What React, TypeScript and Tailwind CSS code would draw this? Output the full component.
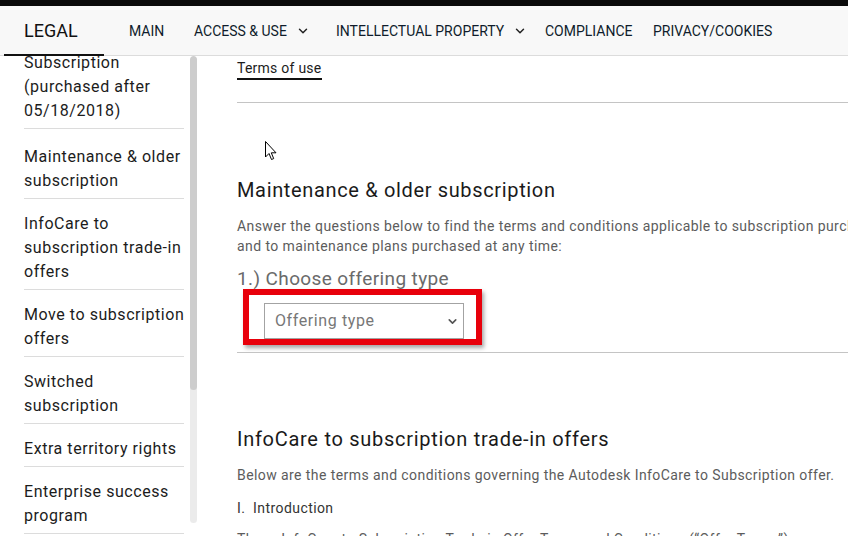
import { ChevronDown } from 'lucide-react';

const font = { fontFamily: 'Roboto, "Noto Sans", sans-serif' };

const navItems = [
  { label: 'MAIN', width: 'w-[65px]', menu: false },
  { label: 'ACCESS & USE', width: 'w-[142px]', menu: true },
  { label: 'INTELLECTUAL PROPERTY', width: 'w-[209px]', menu: true },
  { label: 'COMPLIANCE', width: 'w-[108px]', menu: false },
  { label: 'PRIVACY/COOKIES', width: 'w-auto', menu: false }
];

const sideItems = [
  { lines: ['Subscription', '(purchased after', '05/18/2018)'], pad: 'pt-[13px]' },
  { lines: ['Maintenance & older', 'subscription'], pad: 'pt-[16px]' },
  { lines: ['InfoCare to', 'subscription trade-in', 'offers'], pad: 'pt-[13px]' },
  { lines: ['Move to subscription', 'offers'], pad: 'pt-[13px]' },
  { lines: ['Switched', 'subscription'], pad: 'pt-[13px]' },
  { lines: ['Extra territory rights'], pad: 'pt-[13px]' },
  { lines: ['Enterprise success', 'program'], pad: 'pt-[13px]' }
];

const Header = () => (
  <div className="h-[50px] bg-[#f8f8f8] border-b border-[#dcdcdc] flex items-stretch">
    <div className="ml-1 w-[100px] border-b-2 border-[#111] -mb-px flex items-center pl-5 pt-[1px]">
      <span className="text-[18px] text-[#111]">LEGAL</span>
    </div>
    <nav className="ml-[25px] flex items-center pt-[1px]">
      {navItems.map((item) => (
        <div key={item.label} className={`${item.width} flex items-center gap-[9px]`}>
          <span className="text-[14px] text-[#0f1c2b]">{item.label}</span>
          {item.menu && <ChevronDown size={14} strokeWidth={2.5} className="text-[#222]" />}
        </div>
      ))}
    </nav>
  </div>
);

const Sidebar = () => (
  <div className="flex shrink-0">
    <div className="w-[160px] ml-6 h-[480px] overflow-hidden">
      <ul className="-mt-[18px]">
        {sideItems.map((item, i) => (
          <li
            key={i}
            className={`${item.pad} pb-[5px] border-b border-[#dcdcdc] text-[16px] leading-6 tracking-[0.55px] text-[#1c1c1c]`}>
            {item.lines.map((l) => (
              <div key={l} className="whitespace-nowrap">{l}</div>
            ))}
          </li>
        ))}
      </ul>
    </div>
    <div className="ml-[6px] w-[7px] h-[467px] rounded-full bg-[#ebebeb] overflow-hidden">
      <div className="h-[334px] rounded-full bg-[#cdcdcd]" />
    </div>
  </div>
);

const Cursor = () => (
  <svg className="absolute left-[28px] top-[85px]" width="12" height="20" viewBox="0 0 12 20">
    <path
      d="M0.5 0.5 L0.5 16 L4 12.5 L6.5 18.5 L8.7 17.6 L6.3 11.8 L11 11.8 Z"
      fill="#fff"
      stroke="#000"
      strokeWidth="1"
      strokeLinejoin="round"
    />
  </svg>
);

const Content = () => (
  <div className="relative ml-10 w-[640px] shrink-0 pt-[2px]">
    <Cursor />
    <span className="block w-fit text-[14px] leading-5 tracking-[0.25px] text-[#1c1c1c] border-b-2 border-[#111]">
      Terms of use
    </span>
    <div className="mt-[22px] h-px bg-[#c4c4c4]" />

    <h2 className="mt-[73px] text-[20px] leading-7 tracking-[0.65px] text-[#1a1a1a]">
      Maintenance &amp; older subscription
    </h2>
    <p className="mt-3 text-[14px] leading-5 tracking-[0.42px] text-[#5c5c5c] whitespace-nowrap">
      Answer the questions below to find the terms and conditions applicable to subscription purchased before 05/18/2018
      <br />
      and to maintenance plans purchased at any time:
    </p>
    <h3 className="mt-3 text-[19px] leading-[22px] tracking-[0.38px] text-[#6a6a6a]">1.) Choose offering type</h3>
    <div className="-mt-px ml-[6px] w-[239px] border-[6px] border-[#e8000b] pl-[15px] pt-2 shadow-[2px_3px_4px_rgba(0,0,0,0.35)]">
      <div className="w-[200px] h-9 border border-[#a3a3a3] bg-white flex items-center justify-between pl-[10px] pr-[4px]">
        <span className="text-[16px] tracking-[0.6px] text-[#777]">Offering type</span>
        <ChevronDown size={13} strokeWidth={3} className="text-[#555]" />
      </div>
    </div>
    <div className="mt-[7px] h-px bg-[#c4c4c4]" />

    <h2 className="mt-[72px] text-[20px] leading-7 tracking-[0.72px] text-[#1a1a1a]">
      InfoCare to subscription trade-in offers
    </h2>
    <p className="mt-3 text-[14px] leading-5 tracking-[0.42px] text-[#5c5c5c] whitespace-nowrap">
      Below are the terms and conditions governing the Autodesk InfoCare to Subscription offer.
    </p>
    <p className="mt-[13px] text-[14px] leading-5 tracking-[0.42px] text-[#333] whitespace-nowrap">I.&nbsp; Introduction</p>
    <p className="mt-[11px] text-[14px] leading-5 tracking-[0.42px] text-[#5c5c5c] whitespace-nowrap">
      These InfoCare to Subscription Trade-in Offer Terms and Conditions (“Offer Terms”)
    </p>
  </div>
);

export default function App() {
  return (
    <div className="w-[848px] h-[536px] overflow-hidden bg-white" style={font}>
      <div className="h-[6px] bg-[#0a0a0a]" />
      <Header />
      <div className="flex">
        <Sidebar />
        <Content />
      </div>
    </div>
  );
}
